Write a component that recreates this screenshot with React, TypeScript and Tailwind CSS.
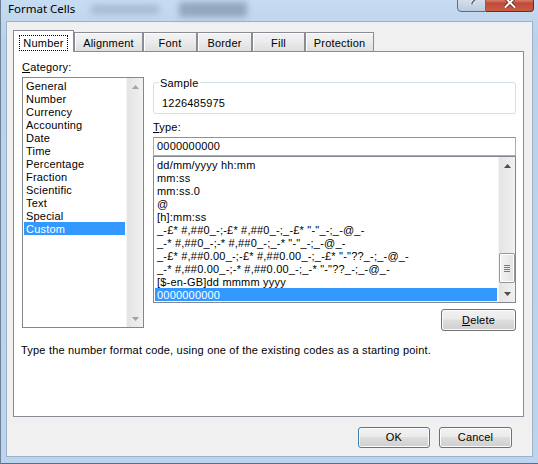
import React from "react";

const categories = [
  "General",
  "Number",
  "Currency",
  "Accounting",
  "Date",
  "Time",
  "Percentage",
  "Fraction",
  "Scientific",
  "Text",
  "Special",
  "Custom",
];

const formats = [
  "dd/mm/yyyy hh:mm",
  "mm:ss",
  "mm:ss.0",
  "@",
  "[h]:mm:ss",
  '_-£* #,##0_-;-£* #,##0_-;_-£* "-"_-;_-@_-',
  '_-* #,##0_-;-* #,##0_-;_-* "-"_-;_-@_-',
  '_-£* #,##0.00_-;-£* #,##0.00_-;_-£* "-"??_-;_-@_-',
  '_-* #,##0.00_-;-* #,##0.00_-;_-* "-"??_-;_-@_-',
  "[$-en-GB]dd mmmm yyyy",
  "0000000000",
];

const tabs = [
  { label: "Alignment", w: "w-[69px]" },
  { label: "Font", w: "w-[54px]" },
  { label: "Border", w: "w-[55px]" },
  { label: "Fill", w: "w-[53px]" },
  { label: "Protection", w: "w-[69px]" },
];

const btn =
  "flex items-center justify-center rounded-[3px] border bg-[linear-gradient(#f2f2f2,#ebebeb_45%,#dddddd_50%,#cfcfcf)] shadow-[inset_0_0_0_1px_#fcfcfc] leading-[13px]";

function Arrow({ dir }: { dir: "up" | "down" }) {
  return (
    <svg width="7" height="4" viewBox="0 0 7 4">
      <path d={dir === "up" ? "M0 4 L3.5 0 L7 4 Z" : "M0 0 L3.5 4 L7 0 Z"} fill="currentColor" />
    </svg>
  );
}

function ScrollBar({ thumb }: { thumb?: boolean }) {
  return (
    <div className="w-[17px] flex flex-col bg-[linear-gradient(90deg,#e4e4e4,#f1f1f1)] border-l border-[#f4f4f4]">
      <div className={`h-[17px] flex items-center justify-center ${thumb ? "text-[#4d4d4d]" : "text-[#a3a3a3]"}`}>
        <Arrow dir="up" />
      </div>
      <div className="flex-1 flex flex-col justify-end items-center">
        {thumb && (
          <div className="w-[16px] h-[30px] mb-[2px] rounded-[2px] border border-[#979797] bg-[linear-gradient(90deg,#f4f4f4,#e3e3e3)] shadow-[inset_0_0_0_1px_#ffffff] flex flex-col items-center justify-center gap-px">
            <div className="w-[6px] h-px bg-[#7a7a7a]" />
            <div className="w-[6px] h-px bg-[#7a7a7a]" />
            <div className="w-[6px] h-px bg-[#7a7a7a]" />
            <div className="w-[6px] h-px bg-[#7a7a7a]" />
          </div>
        )}
      </div>
      <div className={`h-[17px] flex items-center justify-center ${thumb ? "text-[#4d4d4d]" : "text-[#a3a3a3]"}`}>
        <Arrow dir="down" />
      </div>
    </div>
  );
}

// caption buttons: help and close
function HelpIcon() {
  return (
    <svg width="10" height="12" viewBox="0 0 10 12">
      <path
        d="M2 3.5 C2 1.5 3.5 0.5 5 0.5 C6.8 0.5 8 1.6 8 3.2 C8 5 5 5.4 5 7.5 L5 8.5"
        fill="none"
        stroke="#ffffff"
        strokeWidth="3"
      />
      <path
        d="M2 3.5 C2 1.5 3.5 0.5 5 0.5 C6.8 0.5 8 1.6 8 3.2 C8 5 5 5.4 5 7.5 L5 8.5"
        fill="none"
        stroke="#56667c"
        strokeWidth="1.6"
      />
    </svg>
  );
}

function CloseIcon() {
  return (
    <svg width="12" height="11" viewBox="0 0 12 11">
      <path d="M1.5 1 L10.5 10 M10.5 1 L1.5 10" stroke="#6a2218" strokeWidth="3.6" strokeLinecap="square" />
      <path d="M1.5 1 L10.5 10 M10.5 1 L1.5 10" stroke="#ffffff" strokeWidth="2" strokeLinecap="square" />
    </svg>
  );
}

export default function App() {
  return (
    <div className="w-[538px] h-[464px] flex flex-col bg-[linear-gradient(#c6dcf2,#b9d1ea_40px,#bcd4ed)] border-l border-[#6f8196] overflow-hidden font-['Liberation_Sans',Arial,sans-serif] text-[11px] tracking-[0.2px] text-black">
      {/* title bar */}
      <div className="relative h-[21px] shrink-0 pl-[7px] pt-px">
        <div className="absolute left-[90px] top-[5px] w-[68px] h-[9px] bg-[#93a8bf] opacity-60 blur-[3px]" />
        <div className="absolute left-[178px] top-[2px] w-[68px] h-[15px] bg-[#7f93aa] opacity-70 blur-[3px]" />
        <span className="relative font-['Noto_Sans',sans-serif] text-[11.5px] tracking-normal leading-[13px]">Format Cells</span>
        <div className="absolute left-[456px] top-[-8px] flex h-[20px]">
          <div className="w-[29px] rounded-bl-[4px] border border-[#5c6d84] bg-[linear-gradient(#e8eef6,#cdd9e7_55%,#bccbdd)] flex items-center justify-center">
            <HelpIcon />
          </div>
          <div className="w-[48px] rounded-br-[4px] border border-l-0 border-[#6b2a22] bg-[linear-gradient(#e8a394,#d2715f_45%,#c04a37_55%,#c85d45)] flex items-center justify-center">
            <CloseIcon />
          </div>
        </div>
      </div>

      {/* client area */}
      <div className="ml-[5px] w-[527px] h-[436px] border border-[#9db1c8] bg-[#f0f0f0] flex flex-col">
        {/* tab strip */}
        <div className="mt-[8px] ml-[6px] h-[21px] flex items-end">
          <div className="relative z-10 w-[61px] h-[22px] -mb-px border border-b-0 border-[#898c95] bg-white flex justify-center pt-[4px]">
            <span className="h-[16px] px-[3px] border border-dotted border-black leading-[14px]">Number</span>
          </div>
          {tabs.map((t) => (
            <div
              key={t.label}
              className={`${t.w} h-[19px] border border-b-0 border-[#898c95] bg-[linear-gradient(#f3f3f3,#ebebeb_50%,#dedede)] shadow-[inset_1px_1px_0_#ffffff] text-center pt-[4px] leading-[13px]`}
            >
              {t.label}
            </div>
          ))}
        </div>

        {/* tab page */}
        <div className="ml-[6px] w-[511px] h-[366px] border border-[#898c95] bg-white">
          <div className="flex pl-[8px]">
            <div className="w-[122px] pt-[9px]">
              <div className="leading-[13px]">
                <span className="underline">C</span>ategory:
              </div>
              <div className="mt-[3px] h-[251px] border border-[#828790] bg-white flex">
                <div className="flex-1 p-px">
                  {categories.map((c) => (
                    <div
                      key={c}
                      className={`h-[13px] leading-[15px] pl-[2px] ${c === "Custom" ? "bg-[#3399ff] text-white" : ""}`}
                    >
                      {c}
                    </div>
                  ))}
                </div>
                <ScrollBar />
              </div>
            </div>

            <div className="ml-[9px] w-[363px]">
              {/* sample group */}
              <div className="relative mt-[30px] h-[32px] rounded-[3px] border border-[#d5dfe5] pt-[14px] pl-[8px] leading-[13px]">
                <span className="absolute left-[5px] top-[-6px] px-px bg-white leading-[13px]">Sample</span>
                1226485975
              </div>

              <div className="mt-[7px] leading-[13px]">
                <span className="underline">T</span>ype:
              </div>
              <div className="mt-[3px] h-[19px] border border-[#abadb3] border-t-[#8e9297] pl-[3px] leading-[17px]">
                0000000000
              </div>
              <div className="h-[147px] border border-[#828790] bg-white flex">
                <div className="flex-1 min-w-0 p-px overflow-hidden">
                  {formats.map((f, i) => (
                    <div
                      key={i}
                      className={`h-[13px] leading-[15px] pl-[2px] whitespace-nowrap ${i === formats.length - 1 ? "bg-[#3399ff] text-white" : ""}`}
                    >
                      {f}
                    </div>
                  ))}
                </div>
                <ScrollBar thumb />
              </div>

              <div className="mt-[6px] flex justify-end">
                <button className={`${btn} w-[75px] h-[22px] border-[#707070]`}>
                  <span className="underline">D</span>elete
                </button>
              </div>
            </div>
          </div>

          <p className="mt-[13px] pl-[7px] leading-[13px]">
            Type the number format code, using one of the existing codes as a starting point.
          </p>
        </div>

        {/* dialog buttons */}
        <div className="mt-[10px] flex justify-end gap-[9px] pr-[20px]">
          <button className={`${btn} w-[72px] h-[21px] border-[#3c7fb1] shadow-[inset_0_0_0_1px_#a9dcf6]`}>OK</button>
          <button className={`${btn} w-[73px] h-[21px] border-[#707070]`}>Cancel</button>
        </div>
      </div>

      <div className="flex-1 border-b border-[#5d6f84]" />
    </div>
  );
}
